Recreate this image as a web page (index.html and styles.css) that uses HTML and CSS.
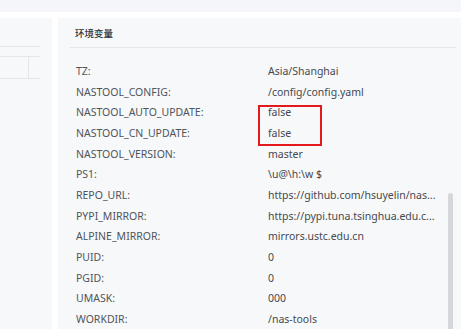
FILE: index.html
```html
<!DOCTYPE html>
<html>
<head>
<meta charset="utf-8">
<link rel="stylesheet" href="styles.css">
</head>
<body>
<div class="topband"></div>
<div class="main">
  <div class="side">
    <div class="side-line l1"></div>
    <div class="side-cells"><div class="cell a"></div><div class="cell b"></div></div>
  </div>
  <div class="card">
    <div class="card-head">环境变量</div>
    <div class="divider"></div>
    <div class="rows">
      <div class="row"><span class="k">TZ:</span><span class="v">Asia/Shanghai</span></div>
      <div class="row"><span class="k">NASTOOL_CONFIG:</span><span class="v">/config/config.yaml</span></div>
      <div class="row"><span class="k">NASTOOL_AUTO_UPDATE:</span><span class="v">false</span></div>
      <div class="row"><span class="k">NASTOOL_CN_UPDATE:</span><span class="v">false</span></div>
      <div class="row"><span class="k">NASTOOL_VERSION:</span><span class="v">master</span></div>
      <div class="row"><span class="k">PS1:</span><span class="v">\u@\h:\w $</span></div>
      <div class="row"><span class="k">REPO_URL:</span><span class="v">https://github.com/hsuyelin/nas...</span></div>
      <div class="row"><span class="k">PYPI_MIRROR:</span><span class="v">https://pypi.tuna.tsinghua.edu.c...</span></div>
      <div class="row"><span class="k">ALPINE_MIRROR:</span><span class="v">mirrors.ustc.edu.cn</span></div>
      <div class="row"><span class="k">PUID:</span><span class="v">0</span></div>
      <div class="row"><span class="k">PGID:</span><span class="v">0</span></div>
      <div class="row"><span class="k">UMASK:</span><span class="v">000</span></div>
      <div class="row"><span class="k">WORKDIR:</span><span class="v">/nas-tools</span></div>
    </div>
    <div class="highlight"></div>
    <div class="scrollbar"></div>
  </div>
</div>
</body>
</html>
```
FILE: styles.css
```css
html, body {
  margin: 0;
  padding: 0;
  background: #ffffff;
  width: 474px;
  height: 333px;
  overflow: hidden;
  font-family: "Noto Sans", "Noto Sans CJK SC", sans-serif;
}
.topband {
  width: 461px;
  height: 12px;
  background: #f4f6f9;
}
.main {
  display: flex;
  gap: 6px;
  margin-top: 6px;
  width: 461px;
  height: 311px;
}
.side {
  width: 52px;
  background: #f7f8fa;
  padding-top: 28px;
  box-sizing: border-box;
}
.side-line {
  width: 40px;
  height: 1px;
  background: #e3e6eb;
}
.side-cells {
  display: flex;
  width: 40px;
  height: 21px;
  margin-top: 9px;
  border-top: 1px solid #e3e6eb;
  border-bottom: 1px solid #e3e6eb;
}
.cell.a {
  width: 28px;
  border-right: 1px solid #e3e6eb;
}
.card {
  position: relative;
  flex: 1;
  background: #f7f8fa;
  overflow: hidden;
}
.card-head {
  height: 29px;
  line-height: 31px;
  padding-left: 17px;
  font-size: 9.5px;
  font-weight: 500;
  color: #2f3338;
  font-family: "Noto Sans CJK SC", "Noto Sans", sans-serif;
}
.divider {
  height: 1px;
  background: #e3e6eb;
  margin: 0 5px 0 12px;
}
.rows {
  padding-top: 13px;
  padding-left: 18px;
}
.row {
  display: flex;
  height: 20.67px;
  line-height: 20.67px;
  font-size: 10.5px;
  white-space: nowrap;
}
.k {
  width: 192px;
  color: #50555b;
}
.v {
  color: #45494f;
}
.highlight {
  position: absolute;
  left: 200px;
  top: 87px;
  width: 60px;
  height: 37px;
  border: 2px solid #e3191c;
}
.scrollbar {
  position: absolute;
  left: 390px;
  top: 175px;
  width: 5px;
  height: 140px;
  border-radius: 3px;
  background: #d5d7db;
}
```
